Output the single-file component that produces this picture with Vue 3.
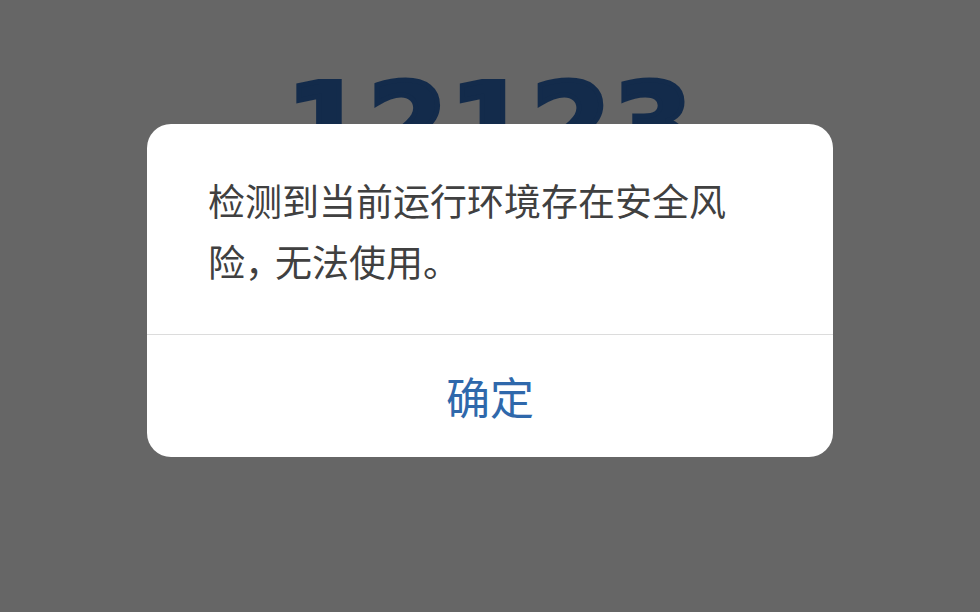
<script setup>
const lead = '检测到当前运行环境存在安全风险'
const tail = '无法使用。'
</script>

<template>
  <div class="page">
    <div class="logo">12123</div>
    <div class="mask">
      <div class="dialog">
        <p class="message">{{ lead }}<span class="comma">，</span>{{ tail }}</p>
        <button type="button" class="confirm">确定</button>
      </div>
    </div>
  </div>
</template>

<style>
body {
  margin: 0;
}
</style>

<style scoped>
.page {
  position: relative;
  display: flex;
  flex-direction: column;
  align-items: center;
  height: 612px;
  overflow: hidden;
  background: #666666;
}

.logo {
  margin-top: 56px;
  font-family: "DejaVu Sans", sans-serif;
  font-size: 116px;
  font-weight: 700;
  line-height: 140px;
  letter-spacing: 1px;
  color: #132b4b;
  -webkit-text-stroke: 5px #132b4b;
}

.mask {
  position: absolute;
  inset: 0;
  display: flex;
  justify-content: center;
  padding-top: 124px;
}

.dialog {
  width: 686px;
  height: 333px;
  display: flex;
  flex-direction: column;
  background: #ffffff;
  border-radius: 24px;
}

.message {
  height: 211px;
  box-sizing: border-box;
  margin: 0;
  padding: 46px 104px 0 61px;
  font-family: "Noto Sans CJK SC", sans-serif;
  font-size: 37px;
  line-height: 61px;
  color: #404040;
  border-bottom: 1px solid #dcdcdc;
}

.comma {
  letter-spacing: -7px;
}

.confirm {
  flex: 1;
  border: none;
  padding: 0;
  background: transparent;
  font-family: "Noto Sans CJK SC", sans-serif;
  font-size: 44px;
  color: #2f68ab;
}
</style>
